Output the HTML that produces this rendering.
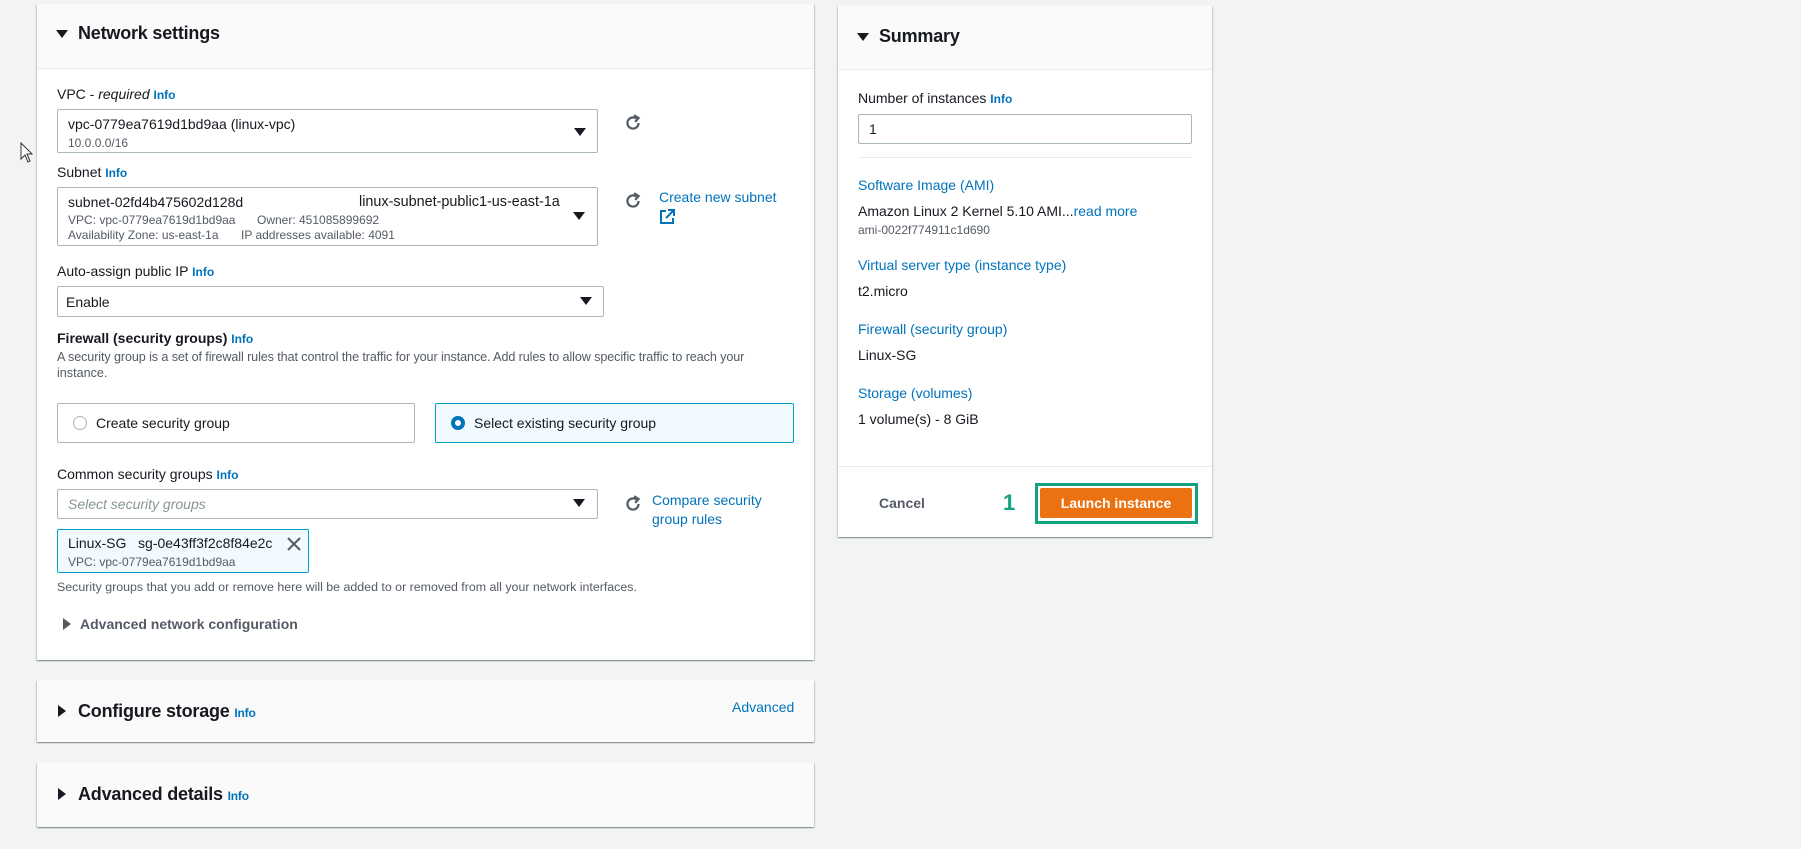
<!DOCTYPE html>
<html><head><meta charset="utf-8"><style>
*{box-sizing:border-box;margin:0;padding:0}
body{width:1801px;height:849px;background:#f2f3f3;font-family:"Liberation Sans",sans-serif;color:#16191f;position:relative;overflow:hidden;font-size:14px}
.a{position:absolute;white-space:nowrap}
.panel{position:absolute;background:#fff;box-shadow:0 1px 1px 0 rgba(0,28,36,.3),1px 1px 1px 0 rgba(0,28,36,.15),-1px 1px 1px 0 rgba(0,28,36,.15)}
.hdr{position:absolute;left:0;right:0;top:0;background:#fafafa;border-bottom:1px solid #eaeded}
.box{position:absolute;border:1px solid #aab7b8;border-radius:2px;background:#fff}
.info{color:#0073bb;font-weight:bold;font-size:12px}
.link{color:#0073bb}
.sm{font-size:12px;color:#545b64}
.smw{color:#545b64}
.tri{position:absolute;width:0;height:0;border-left:6px solid transparent;border-right:6px solid transparent;border-top:8px solid #16191f}
.tr{position:absolute;width:0;height:0;border-top:6px solid transparent;border-bottom:6px solid transparent;border-left:8px solid #16191f}
.td{position:absolute;width:0;height:0;border-left:6px solid transparent;border-right:6px solid transparent;border-top:8px solid #16191f}
.h2{font-size:18px;font-weight:bold;letter-spacing:-0.2px}
</style></head><body>

<svg class="a" style="left:20px;top:142px" width="14" height="22" viewBox="0 0 14 22"><path d="M1 1 L1 17 L5 13 L8 20 L10 19 L7 12 L12 12 Z" fill="#fff" stroke="#333" stroke-width="1"/></svg>

<div class="panel" style="left:37px;top:4px;width:777px;height:656px">
 <div class="hdr" style="height:65px"></div>
</div>
<div class="td" style="left:56px;top:30px"></div>
<div class="a h2" style="left:78px;top:23px">Network settings</div>

<div class="a" style="left:57px;top:86px">VPC - <i>required</i> <span class="info">Info</span></div>
<div class="box" style="left:57px;top:109px;width:541px;height:44px"></div>
<div class="a" style="left:68px;top:116px">vpc-0779ea7619d1bd9aa (linux-vpc)</div>
<div class="a sm" style="left:68px;top:136px">10.0.0.0/16</div>
<div class="tri" style="left:574px;top:128px"></div>

<svg class="a" style="left:623px;top:113px" width="20" height="20" viewBox="0 0 18 18"><path d="M14 9a5 5 0 1 1-2-4" fill="none" stroke="#545b64" stroke-width="2"/><path d="M10 2 L14 4.5 L11 8" fill="none" stroke="#545b64" stroke-width="2"/></svg>

<div class="a" style="left:57px;top:164px">Subnet <span class="info">Info</span></div>
<div class="box" style="left:57px;top:187px;width:541px;height:59px"></div>
<div class="a" style="left:68px;top:194px">subnet-02fd4b475602d128d</div>
<div class="a" style="left:359px;top:194px;font-size:14.4px">linux-subnet-public1-us-east-1a</div>
<div class="a sm" style="left:68px;top:213px">VPC: vpc-0779ea7619d1bd9aa</div>
<div class="a sm" style="left:257px;top:213px">Owner: 451085899692</div>
<div class="a sm" style="left:68px;top:228px">Availability Zone: us-east-1a</div>
<div class="a sm" style="left:241px;top:228px">IP addresses available: 4091</div>
<div class="td" style="left:573px;top:212px"></div>
<svg class="a" style="left:623px;top:191px" width="20" height="20" viewBox="0 0 18 18"><path d="M14 9a5 5 0 1 1-2-4" fill="none" stroke="#545b64" stroke-width="2"/><path d="M10 2 L14 4.5 L11 8" fill="none" stroke="#545b64" stroke-width="2"/></svg>
<div class="a link" style="left:659px;top:189px">Create new subnet</div>
<svg class="a" style="left:659px;top:209px" width="16" height="16" viewBox="0 0 16 16"><path d="M7 2H2v12h12V9" fill="none" stroke="#0073bb" stroke-width="2"/><path d="M9 1h6v6M15 1L7 9" fill="none" stroke="#0073bb" stroke-width="2"/></svg>

<div class="a" style="left:57px;top:263px">Auto-assign public IP <span class="info">Info</span></div>
<div class="box" style="left:57px;top:286px;width:547px;height:31px"></div>
<div class="a" style="left:66px;top:294px">Enable</div>
<div class="tri" style="left:580px;top:297px"></div>

<div class="a" style="left:57px;top:330px;font-weight:bold">Firewall (security groups) <span class="info">Info</span></div>
<div class="a smw" style="left:57px;top:350px;font-size:12.6px;letter-spacing:-0.1px">A security group is a set of firewall rules that control the traffic for your instance. Add rules to allow specific traffic to reach your</div>
<div class="a smw" style="left:57px;top:366px;font-size:12.6px">instance.</div>

<div class="box" style="left:57px;top:403px;width:358px;height:40px"></div>
<div class="a" style="left:73px;top:416px;width:14px;height:14px;border:1px solid #aab7b8;border-radius:50%"></div>
<div class="a" style="left:96px;top:415px">Create security group</div>
<div class="box" style="left:435px;top:403px;width:359px;height:40px;border-color:#00a1c9;background:#f1faff"></div>
<div class="a" style="left:451px;top:416px;width:14px;height:14px;border:4px solid #0073bb;border-radius:50%;background:#fff"></div>
<div class="a" style="left:474px;top:415px">Select existing security group</div>

<div class="a" style="left:57px;top:466px">Common security groups <span class="info">Info</span></div>
<div class="box" style="left:57px;top:489px;width:541px;height:30px"></div>
<div class="a" style="left:68px;top:496px;color:#879596;font-style:italic">Select security groups</div>
<div class="td" style="left:573px;top:499px"></div>
<svg class="a" style="left:623px;top:494px" width="20" height="20" viewBox="0 0 18 18"><path d="M14 9a5 5 0 1 1-2-4" fill="none" stroke="#545b64" stroke-width="2"/><path d="M10 2 L14 4.5 L11 8" fill="none" stroke="#545b64" stroke-width="2"/></svg>
<div class="a link" style="left:652px;top:492px">Compare security</div>
<div class="a link" style="left:652px;top:511px">group rules</div>

<div class="box" style="left:57px;top:529px;width:252px;height:44px;border-color:#00a1c9;background:#f1faff"></div>
<div class="a" style="left:68px;top:535px">Linux-SG&nbsp;&nbsp; sg-0e43ff3f2c8f84e2c</div>
<div class="a sm" style="left:68px;top:555px">VPC: vpc-0779ea7619d1bd9aa</div>
<svg class="a" style="left:287px;top:537px" width="14" height="14" viewBox="0 0 14 14"><path d="M1 1L13 13M13 1L1 13" stroke="#545b64" stroke-width="2"/></svg>
<div class="a smw" style="left:57px;top:580px;font-size:12.4px">Security groups that you add or remove here will be added to or removed from all your network interfaces.</div>

<div class="tr" style="left:63px;top:618px;border-left-color:#545b64"></div>
<div class="a" style="left:80px;top:616px;font-weight:bold;color:#545b64">Advanced network configuration</div>

<div class="panel" style="left:37px;top:680px;width:777px;height:62px;background:#fafafa"></div>
<div class="tr" style="left:58px;top:705px"></div>
<div class="a h2" style="left:78px;top:701px">Configure storage <span class="info">Info</span></div>
<div class="a link" style="left:732px;top:699px">Advanced</div>

<div class="panel" style="left:37px;top:763px;width:777px;height:64px;background:#fafafa"></div>
<div class="tr" style="left:58px;top:788px"></div>
<div class="a h2" style="left:78px;top:784px">Advanced details <span class="info">Info</span></div>

<div class="panel" style="left:838px;top:6px;width:374px;height:531px">
 <div class="hdr" style="height:64px"></div>
 <div style="position:absolute;left:0;right:0;top:460px;border-top:1px solid #eaeded"></div>
</div>
<div class="td" style="left:857px;top:33px"></div>
<div class="a h2" style="left:879px;top:26px">Summary</div>
<div class="a" style="left:858px;top:90px">Number of instances <span class="info">Info</span></div>
<div class="box" style="left:858px;top:114px;width:334px;height:30px"></div>
<div class="a" style="left:869px;top:121px">1</div>
<div class="a" style="left:858px;top:157px;width:334px;border-top:1px solid #eaeded"></div>
<div class="a link" style="left:858px;top:177px">Software Image (AMI)</div>
<div class="a" style="left:858px;top:203px">Amazon Linux 2 Kernel 5.10 AMI...<span class="link">read more</span></div>
<div class="a sm" style="left:858px;top:223px">ami-0022f774911c1d690</div>
<div class="a link" style="left:858px;top:257px">Virtual server type (instance type)</div>
<div class="a" style="left:858px;top:283px">t2.micro</div>
<div class="a link" style="left:858px;top:321px">Firewall (security group)</div>
<div class="a" style="left:858px;top:347px">Linux-SG</div>
<div class="a link" style="left:858px;top:385px">Storage (volumes)</div>
<div class="a" style="left:858px;top:411px">1 volume(s) - 8 GiB</div>

<div class="a" style="left:879px;top:495px;font-weight:bold;color:#545b64">Cancel</div>
<div class="a" style="left:1003px;top:490px;font-weight:bold;font-size:22px;color:#14a37f">1</div>
<div class="a" style="left:1035px;top:483px;width:163px;height:41px;border:3px solid #14a37f"></div>
<div class="a" style="left:1040px;top:488px;width:152px;height:30px;background:#ec7211;border-radius:2px;color:#fff;font-weight:bold;text-align:center;line-height:30px">Launch instance</div>
</body></html>
